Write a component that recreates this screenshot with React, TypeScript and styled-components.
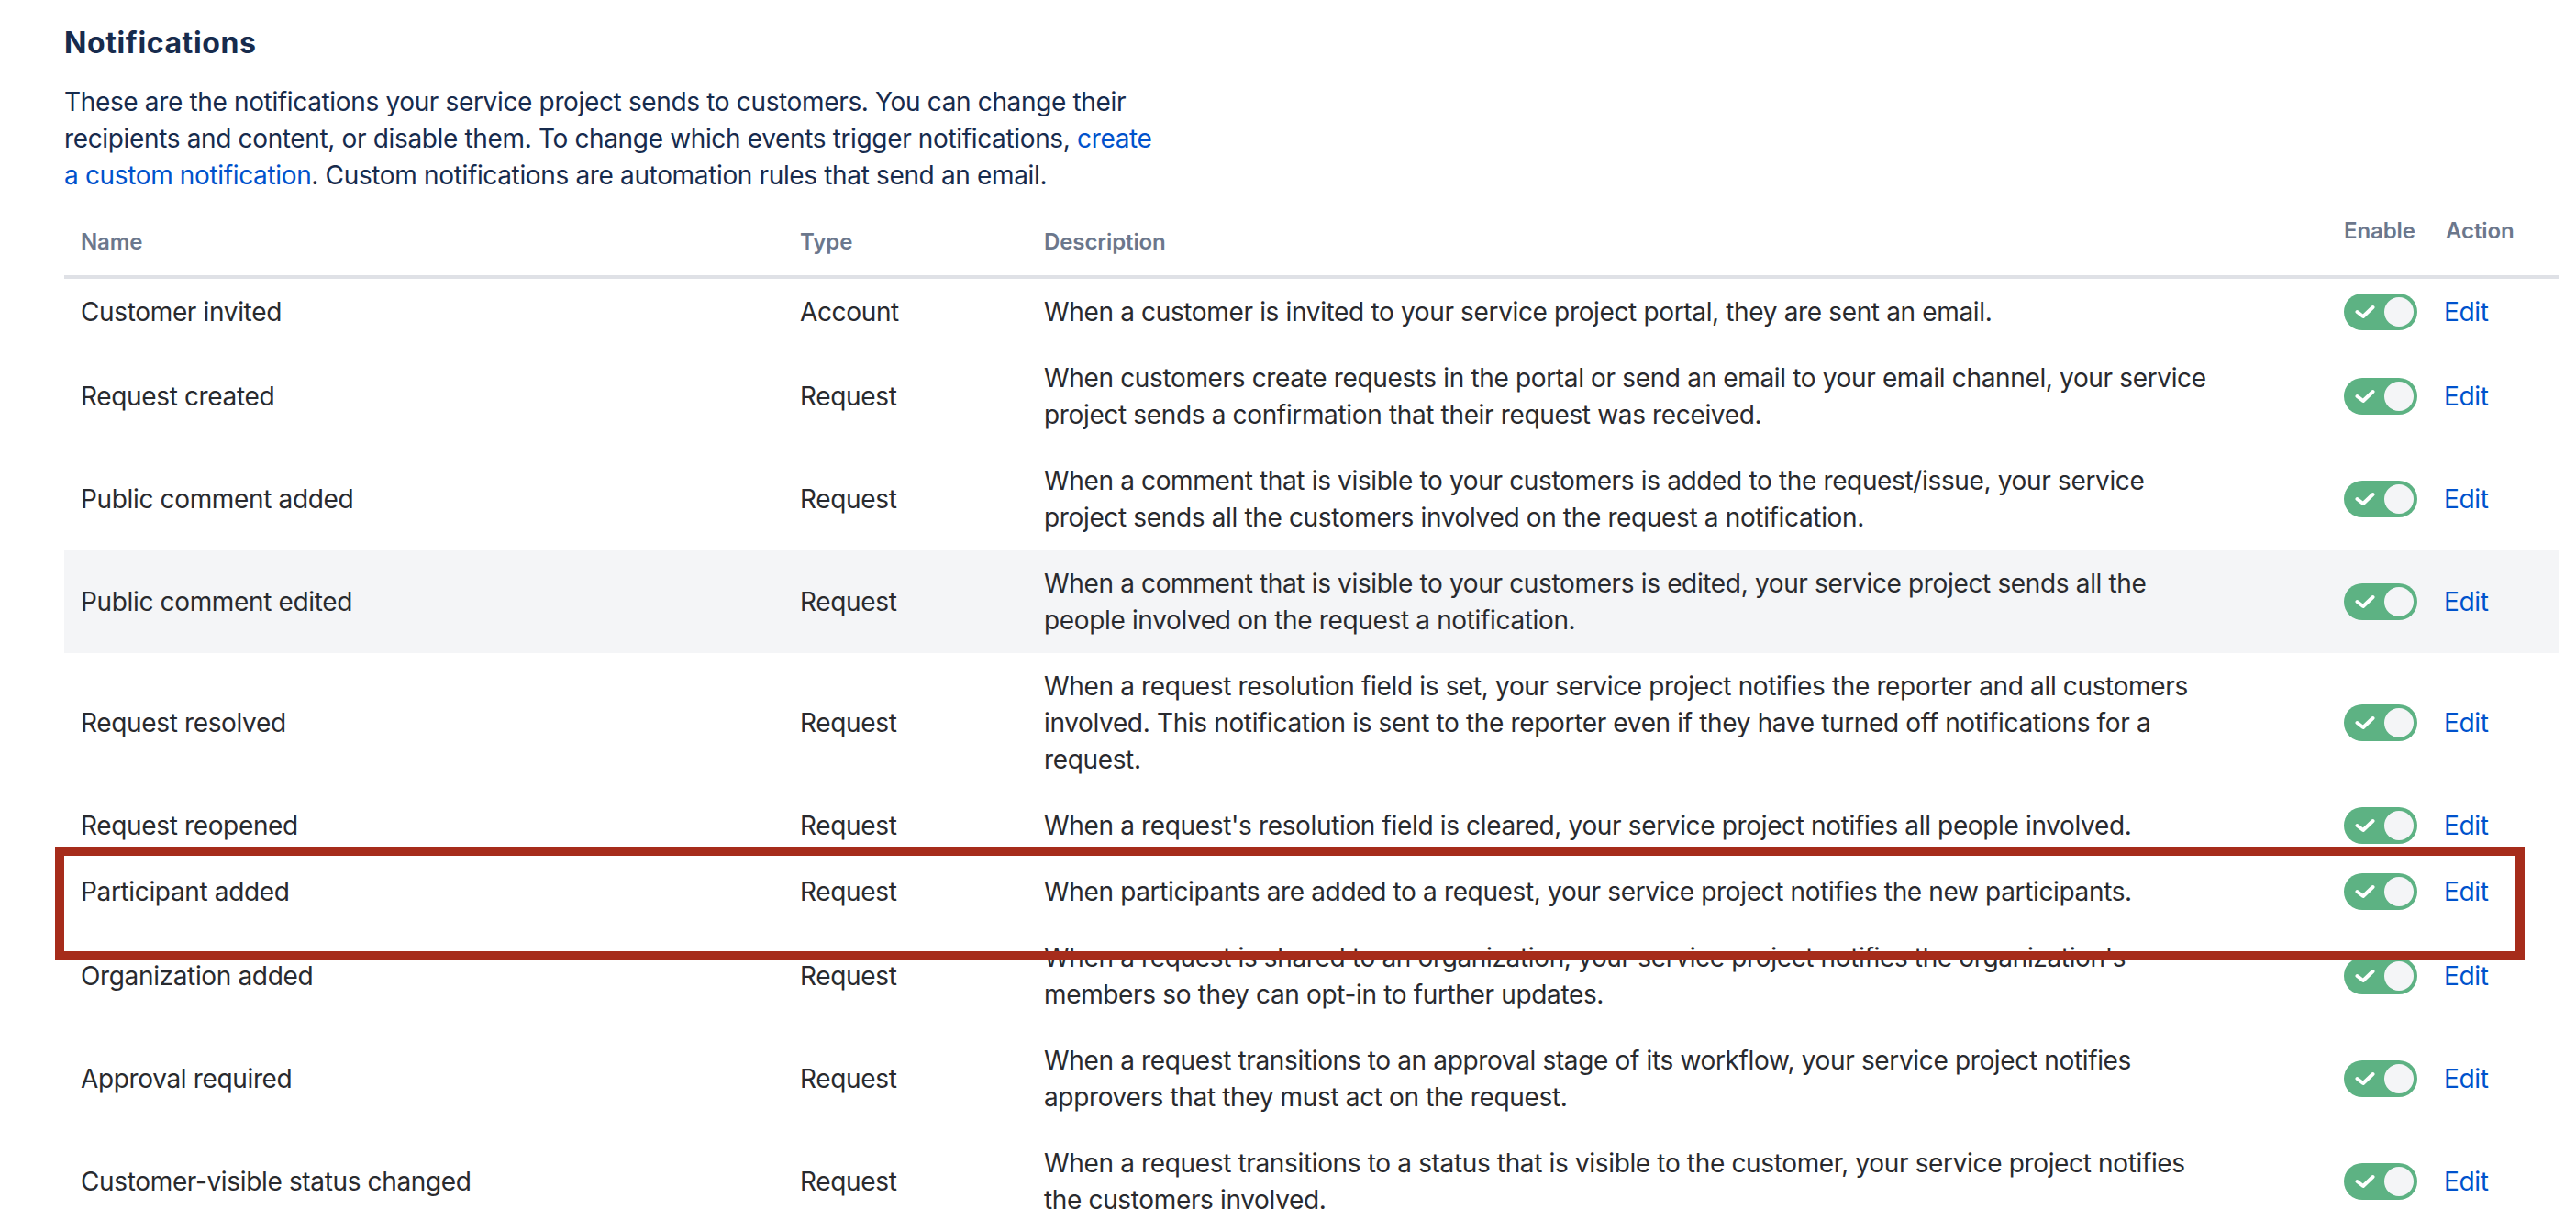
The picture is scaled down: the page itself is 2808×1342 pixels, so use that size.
import React from "react";
import styled, { createGlobalStyle } from "styled-components";

const GlobalStyle = createGlobalStyle`
  html, body { margin: 0; padding: 0; background: #ffffff; }
  body {
    font-family: Inter, "Noto Sans", "Liberation Sans", sans-serif;
    -webkit-font-smoothing: antialiased;
  }
`;

const Page = styled.div`
  position: relative;
  padding: 27px 18px 0 70px;
  box-sizing: border-box;
  width: 2808px;
`;

const Heading = styled.h1`
  margin: 0;
  font-size: 32px;
  line-height: 40px;
  font-weight: 700;
  letter-spacing: 0.6px;
  color: #172b4d;
`;

const Intro = styled.p`
  margin: 24px 0 0;
  max-width: 1200px;
  font-size: 28px;
  line-height: 40px;
  letter-spacing: -0.35px;
  color: #172b4d;
`;

const Link = styled.a`
  color: #0052cc;
  text-decoration: none;
  cursor: pointer;
`;

const Table = styled.div`
  margin-top: 21px;
  width: 2720px;
`;

const cols = "784px 266px 1417px 111px 142px";

const HeadRow = styled.div`
  display: grid;
  grid-template-columns: ${cols};
  border-bottom: 4px solid #dfe1e6;
`;

const HeadCell = styled.div<{ $raised?: boolean }>`
  padding: ${(p) => (p.$raised ? "4px 18px 32px" : "16px 18px 20px")};
  font-size: 24px;
  line-height: 32px;
  font-weight: 600;
  letter-spacing: -0.1px;
  color: #6b778c;
  white-space: nowrap;
`;

const BodyRow = styled.div<{ $hover?: boolean }>`
  display: grid;
  grid-template-columns: ${cols};
  align-items: center;
  background: ${(p) => (p.$hover ? "#f4f5f7" : "transparent")};
`;

const Cell = styled.div<{ $tight?: boolean }>`
  padding: ${(p) => (p.$tight ? "16px 18px 16px 16px" : "16px 18px")};
  font-size: 28px;
  line-height: 40px;
  letter-spacing: -0.35px;
  color: #292a2e;
`;

const DescText = styled.div`
  max-width: 1290px;
`;

const ToggleTrack = styled.div`
  position: relative;
  width: 80px;
  height: 40px;
  border-radius: 20px;
  background: #5db283;
  display: flex;
  align-items: center;
  justify-content: flex-end;
  padding: 0 4px;
  box-sizing: border-box;
`;

const ToggleKnob = styled.div`
  width: 32px;
  height: 32px;
  border-radius: 50%;
  background: #f4f5f7;
`;

const CheckIcon = styled.svg`
  position: absolute;
  left: 12px;
  top: 12px;
`;

const EditLink = styled.a`
  color: #0052cc;
  text-decoration: none;
  cursor: pointer;
`;

const Highlight = styled.div`
  position: absolute;
  left: 60px;
  top: 923px;
  width: 2692px;
  height: 124px;
  box-sizing: border-box;
  border: 10px solid #a62c1b;
  pointer-events: none;
`;

type Row = { name: string; type: string; desc: string; hover?: boolean };

const rows: Row[] = [
  { name: "Customer invited", type: "Account", desc: "When a customer is invited to your service project portal, they are sent an email." },
  { name: "Request created", type: "Request", desc: "When customers create requests in the portal or send an email to your email channel, your service project sends a confirmation that their request was received." },
  { name: "Public comment added", type: "Request", desc: "When a comment that is visible to your customers is added to the request/issue, your service project sends all the customers involved on the request a notification." },
  { name: "Public comment edited", type: "Request", desc: "When a comment that is visible to your customers is edited, your service project sends all the people involved on the request a notification.", hover: true },
  { name: "Request resolved", type: "Request", desc: "When a request resolution field is set, your service project notifies the reporter and all customers involved. This notification is sent to the reporter even if they have turned off notifications for a request." },
  { name: "Request reopened", type: "Request", desc: "When a request's resolution field is cleared, your service project notifies all people involved." },
  { name: "Participant added", type: "Request", desc: "When participants are added to a request, your service project notifies the new participants." },
  { name: "Organization added", type: "Request", desc: "When a request is shared to an organization, your service project notifies the organization's members so they can opt-in to further updates." },
  { name: "Approval required", type: "Request", desc: "When a request transitions to an approval stage of its workflow, your service project notifies approvers that they must act on the request." },
  { name: "Customer-visible status changed", type: "Request", desc: "When a request transitions to a status that is visible to the customer, your service project notifies the customers involved." },
];

function Toggle() {
  return (
    <ToggleTrack>
      <CheckIcon width="22" height="16" viewBox="0 0 22 16" fill="none">
        <polyline points="2.5,8 9,13 19.5,3" stroke="#ffffff" strokeWidth="4" strokeLinecap="round" strokeLinejoin="round" />
      </CheckIcon>
      <ToggleKnob />
    </ToggleTrack>
  );
}

export default function App() {
  return (
    <>
      <GlobalStyle />
      <Page>
        <Heading>Notifications</Heading>
        <Intro>
          These are the notifications your service project sends to customers. You can change their recipients and
          content, or disable them. To change which events trigger notifications,{" "}
          <Link>create a custom notification</Link>. Custom notifications are automation rules that send an email.
        </Intro>
        <Table>
          <HeadRow>
            <HeadCell>Name</HeadCell>
            <HeadCell>Type</HeadCell>
            <HeadCell>Description</HeadCell>
            <HeadCell $raised>Enable</HeadCell>
            <HeadCell $raised>Action</HeadCell>
          </HeadRow>
          {rows.map((r) => (
            <BodyRow key={r.name} $hover={r.hover}>
              <Cell>{r.name}</Cell>
              <Cell>{r.type}</Cell>
              <Cell>
                <DescText>{r.desc}</DescText>
              </Cell>
              <Cell>
                <Toggle />
              </Cell>
              <Cell $tight>
                <EditLink>Edit</EditLink>
              </Cell>
            </BodyRow>
          ))}
        </Table>
        <Highlight />
      </Page>
    </>
  );
}
